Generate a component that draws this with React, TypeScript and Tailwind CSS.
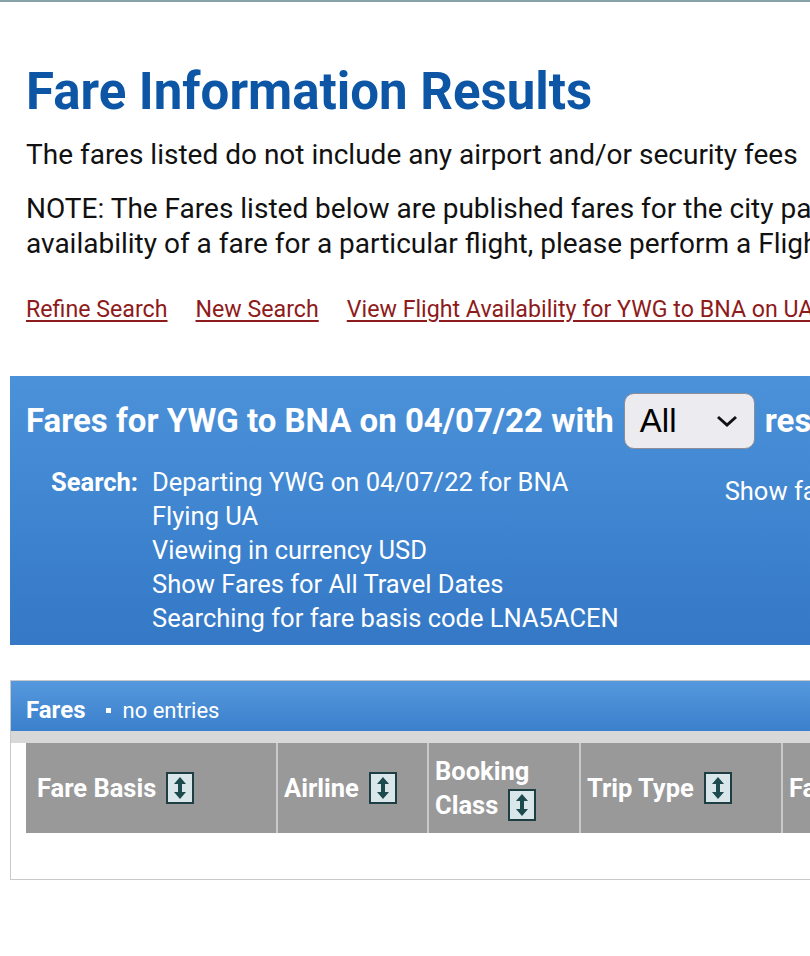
import React from "react";

function SortIcon() {
  return (
    <span className="inline-flex h-[32px] w-[28px] shrink-0 items-center justify-center border-2 border-[#1d3f42] bg-[#d9e6ea] align-middle">
      <svg width="14" height="24" viewBox="0 0 14 24">
        <path d="M7 1 L13 8 H9 V16 H13 L7 23 L1 16 H5 V8 H1 Z" fill="#1d4a4c" />
      </svg>
    </span>
  );
}

const searchLines = [
  "Departing YWG on 04/07/22 for BNA",
  "Flying UA",
  "Viewing in currency USD",
  "Show Fares for All Travel Dates",
  "Searching for fare basis code LNA5ACEN",
];

export default function App() {
  return (
    <div className="h-[956px] w-[810px] overflow-hidden bg-white font-['Roboto',sans-serif]">
      <div className="h-[2px] bg-[#86a2a8]" />
      <div className="w-[1400px]">
        <div className="px-[26px]">
          <h1 className="pt-[60px] text-[51px] font-bold leading-[60px] text-[#0d56a5]">Fare Information Results</h1>
          <p className="mt-[15px] text-[28px] leading-[35px] text-[#111]">
            The fares listed do not include any airport and/or security fees
          </p>
          <p className="mt-[19px] w-[1300px] text-[28px] leading-[35px] text-[#111]">
            NOTE: The Fares listed below are published fares for the city pair searched. To check the
            <br />
            availability of a fare for a particular flight, please perform a Flight Availability search.
          </p>
          <div className="mt-[33px] flex gap-[28px] text-[23.2px] leading-[30px] text-[#8e1b1b]">
            <a className="underline underline-offset-[3px]">Refine Search</a>
            <a className="underline underline-offset-[3px]">New Search</a>
            <a className="underline underline-offset-[3px]">View Flight Availability for YWG to BNA on UA</a>
          </div>
        </div>

        <div className="ml-[10px] mt-[52px] h-[269px] bg-gradient-to-b from-[#4b92da] to-[#3478c6] pl-[16px] pt-[17px] text-white">
          <div className="flex items-center gap-[10px]">
            <span className="text-[33px] font-bold">Fares for YWG to BNA on 04/07/22 with</span>
            <div className="flex h-[56px] w-[131px] items-center justify-between rounded-[10px] border border-[#8d8d95] bg-[#ecebf0] pl-[15px] pr-[15px] text-black">
              <span className="text-[33px] font-['Liberation_Sans',sans-serif]">All</span>
              <svg width="24" height="14" viewBox="0 0 24 14">
                <path d="M3 3 L12 11 L21 3" fill="none" stroke="#111" strokeWidth="3" />
              </svg>
            </div>
            <span className="text-[33px] font-bold">results per page</span>
          </div>
          <div className="mt-[16px] flex">
            <div className="flex">
              <span className="w-[126px] pr-[14px] text-right text-[25.5px] font-bold leading-[34px]">Search:</span>
              <div className="flex flex-col text-[25.5px] leading-[34px]">
                {searchLines.map((l) => (
                  <span key={l}>{l}</span>
                ))}
              </div>
            </div>
            <span className="ml-[106px] mt-[9px] text-[25.5px] leading-[34px]">Show fares in USD</span>
          </div>
        </div>

        <div className="ml-[10px] mt-[35px] h-[200px] border border-[#c9c9c9]">
          <div className="flex h-[50px] items-center bg-gradient-to-b from-[#5598dd] to-[#3b80cc] pl-[15px] pt-[8px] text-white">
            <span className="text-[24px] font-bold">Fares</span>
            <span className="ml-[21px] h-[5px] w-[5px] bg-white" />
            <span className="ml-[11px] text-[22px]">no entries</span>
          </div>
          <div className="h-[12px] bg-[#d8d8d8]" />
          <div className="ml-[15px] flex h-[90px] bg-[#999999] text-[25.5px] font-bold leading-[34px] text-white">
            <div className="flex w-[252px] items-center gap-[10px] border-r-2 border-[#c9c9c9] pl-[11px]">
              Fare Basis <SortIcon />
            </div>
            <div className="flex w-[151px] items-center gap-[10px] border-r-2 border-[#c9c9c9] pl-[6px]">
              Airline <SortIcon />
            </div>
            <div className="flex w-[152px] flex-col justify-center border-r-2 border-[#c9c9c9] pl-[6px]">
              <span>Booking</span>
              <span className="flex items-center gap-[10px]">
                Class <SortIcon />
              </span>
            </div>
            <div className="flex w-[202px] items-center gap-[10px] border-r-2 border-[#c9c9c9] pl-[6px]">
              Trip Type <SortIcon />
            </div>
            <div className="flex items-center pl-[6px]">Fare</div>
          </div>
        </div>
      </div>
    </div>
  );
}
